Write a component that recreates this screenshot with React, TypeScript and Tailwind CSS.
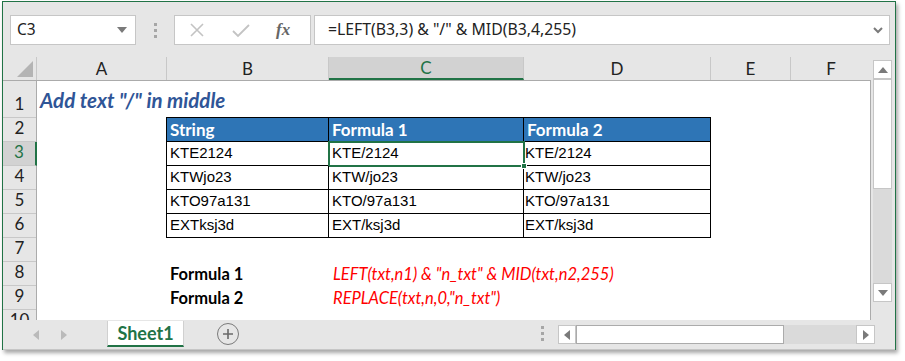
import React from "react";

const rows = [
  ["KTE2124", "KTE/2124", "KTE/2124"],
  ["KTWjo23", "KTW/jo23", "KTW/jo23"],
  ["KTO97a131", "KTO/97a131", "KTO/97a131"],
  ["EXTksj3d", "EXT/ksj3d", "EXT/ksj3d"],
];

const cols = [
  { name: "A", w: "w-[130px]" },
  { name: "B", w: "w-[162px]" },
  { name: "C", w: "w-[195px]" },
  { name: "D", w: "w-[187px]" },
  { name: "E", w: "w-[80px]" },
  { name: "F", w: "w-[80px]" },
];

const rowHeights = ["h-[37px]", "h-[24px]", "h-[24px]", "h-[24px]", "h-[24px]", "h-[24px]", "h-[24px]", "h-[24px]", "h-[24px]", "h-[24px]"];

function Tri({ dir }: { dir: "up" | "down" | "left" | "right" }) {
  const pts = {
    up: "0,6 5,0 10,6",
    down: "0,0 10,0 5,6",
    left: "6,0 6,10 0,5",
    right: "0,0 0,10 6,5",
  }[dir];
  const size = dir === "up" || dir === "down" ? { w: 10, h: 6 } : { w: 6, h: 10 };
  return (
    <svg width={size.w} height={size.h} viewBox={`0 0 ${size.w} ${size.h}`}>
      <polygon points={pts} fill="#7a7a7a" />
    </svg>
  );
}

function Dots() {
  return (
    <div className="flex flex-col gap-[3px]">
      <div className="w-[3px] h-[3px] bg-[#a6a6a6]" />
      <div className="w-[3px] h-[3px] bg-[#a6a6a6]" />
      <div className="w-[3px] h-[3px] bg-[#a6a6a6]" />
    </div>
  );
}

export default function App() {
  const ui = { fontFamily: '"Noto Sans", "Open Sans", sans-serif' };
  const cal = { fontFamily: 'Lato, "Noto Sans", sans-serif' };
  const arial = { fontFamily: '"Liberation Sans", Arial, sans-serif' };

  return (
    <div className="w-[905px] h-[361px] bg-white pt-[1px] pl-[2px] overflow-hidden">
      <div className="w-[894px] h-[349px] bg-[#e6e6e6] border-t border-l border-r border-[#217346] border-b-0 shadow-[2px_3px_4px_rgba(0,0,0,0.35)] flex flex-col">
        {/* formula bar */}
        <div className="h-[55px] flex items-start pt-[13px] pl-[7px] shrink-0" style={ui}>
          <div className="w-[126px] h-[30px] bg-white border border-[#c6c6c6] flex items-center justify-between pl-[6px] pr-[8px]">
            <span className="text-[15.5px] text-[#222]">C3</span>
            <Tri dir="down" />
          </div>
          <div className="w-[38px] h-[30px] flex items-center justify-center">
            <Dots />
          </div>
          <div className="w-[137px] h-[30px] bg-white border border-[#c6c6c6] flex items-center pl-[14px]">
            <svg width="16" height="16" viewBox="0 0 16 16">
              <path d="M2 2 L14 14 M14 2 L2 14" stroke="#c3c3c3" strokeWidth="1.6" fill="none" />
            </svg>
            <svg width="18" height="16" viewBox="0 0 18 16" className="ml-[27px]">
              <path d="M1 9 L6 14 L17 3" stroke="#c3c3c3" strokeWidth="1.8" fill="none" />
            </svg>
            <span className="ml-[26px] text-[17px] italic font-bold text-[#666]" style={{ fontFamily: '"Liberation Serif", serif' }}>
              fx
            </span>
          </div>
          <div className="ml-[3px] w-[576px] h-[30px] bg-white border border-[#c6c6c6] flex items-center justify-between pl-[13px] pr-[6px]">
            <span className="text-[15.8px] text-[#222]">=LEFT(B3,3) &amp; "/" &amp; MID(B3,4,255)</span>
            <svg width="10" height="7" viewBox="0 0 10 7">
              <path d="M1 1 L5 5 L9 1" stroke="#7a7a7a" strokeWidth="2" fill="none" />
            </svg>
          </div>
        </div>

        {/* sheet area */}
        <div className="flex h-[264px] shrink-0">
          <div className="w-[868px] flex flex-col">
            {/* column headers */}
            <div className="h-[24px] flex border-b border-[#ababab] shrink-0" style={cal}>
              <div className="w-[34px] border-r border-[#c8c8c8] flex items-end justify-end pr-[3px] pb-[3px]">
                <svg width="16" height="16" viewBox="0 0 16 16">
                  <polygon points="16,0 16,16 0,16" fill="#b4b4b4" />
                </svg>
              </div>
              {cols.map((c) =>
                c.name === "C" ? (
                  <div key={c.name} className={`${c.w} bg-[#d2d2d2] border-r border-[#c8c8c8] border-b-2 border-b-[#217346] flex items-center justify-center text-[17px] text-[#217346]`}>
                    {c.name}
                  </div>
                ) : (
                  <div key={c.name} className={`${c.w} border-r border-[#c8c8c8] flex items-center justify-center text-[17px] text-[#222] ${c.name === "F" ? "border-r-0" : ""}`}>
                    {c.name}
                  </div>
                )
              )}
            </div>

            {/* grid */}
            <div className="flex h-[239px] overflow-hidden border-r border-[#ababab]">
              <div className="w-[34px] flex flex-col border-r border-[#ababab] shrink-0" style={cal}>
                {rowHeights.map((h, i) =>
                  i === 2 ? (
                    <div key={i} className={`${h} shrink-0 bg-[#d2d2d2] border-b border-[#c8c8c8] border-r-2 border-r-[#217346] -mr-[1px] flex items-end justify-center pb-[1px] text-[17px] text-[#217346]`}>
                      {i + 1}
                    </div>
                  ) : (
                    <div key={i} className={`${h} shrink-0 border-b border-[#c8c8c8] flex items-end justify-center pb-[1px] text-[17px] text-[#222]`}>
                      {i + 1}
                    </div>
                  )
                )}
              </div>

              <div className="flex-1 bg-white flex flex-col">
                <div className="h-[36px] flex items-end pl-[3px] pb-[7px] shrink-0">
                  <span className="text-[20.5px] leading-none font-bold italic text-[#2f5597]" style={cal}>
                    Add text "/" in middle
                  </span>
                </div>

                {/* table */}
                <div className="ml-[129px] flex flex-col w-fit">
                  <div className="flex h-[25px] border-t border-black text-white font-bold text-[17px]" style={cal}>
                    <div className="w-[162px] bg-[#2e75b6] border-l border-b border-black pl-[3px] flex items-center">String</div>
                    <div className="w-[195px] bg-[#2e75b6] border-l border-b border-black pl-[3px] flex items-center">Formula 1</div>
                    <div className="w-[188px] bg-[#2e75b6] border-l border-r border-b border-black pl-[3px] flex items-center">Formula 2</div>
                  </div>
                  {rows.map((r, i) => (
                    <div key={i} className="flex h-[24px] text-[15px] text-black" style={arial}>
                      <div className="w-[162px] border-l border-b border-black pl-[3px] flex items-center">{r[0]}</div>
                      <div className="w-[195px] border-l border-b border-black pl-[3px] flex items-center relative">
                        {r[1]}
                        {i === 0 && (
                          <>
                            <div className="absolute -left-[1px] -top-[1px] w-[197px] h-[26px] border-2 border-[#217346]" />
                            <div className="absolute -right-[4px] -bottom-[4px] w-[6px] h-[6px] bg-[#217346] border border-white" />
                          </>
                        )}
                      </div>
                      <div className="w-[188px] border-l border-r border-b border-black pl-[1px] flex items-center">{r[2]}</div>
                    </div>
                  ))}
                </div>

                <div className="h-[24px] shrink-0" />
                <div className="h-[24px] flex items-center shrink-0 text-[16.5px]" style={cal}>
                  <div className="ml-[133px] w-[162px] font-bold text-black">Formula 1</div>
                  <div className="pl-[1px] italic text-[#ff0000]">LEFT(txt,n1) &amp; "n_txt" &amp; MID(txt,n2,255)</div>
                </div>
                <div className="h-[24px] flex items-center shrink-0 text-[16.5px]" style={cal}>
                  <div className="ml-[133px] w-[162px] font-bold text-black">Formula 2</div>
                  <div className="pl-[1px] italic text-[#ff0000]">REPLACE(txt,n,0,"n_txt")</div>
                </div>
              </div>
            </div>
          </div>

          {/* vertical scrollbar */}
          <div className="w-[24px] pl-[2px] pt-[3px] flex flex-col">
            <div className="w-[19px] h-[19px] bg-white border border-[#c6c6c6] flex items-center justify-center">
              <Tri dir="up" />
            </div>
            <div className="w-[19px] h-[223px] bg-[#dadada] flex flex-col justify-between">
              <div className="w-[19px] h-[110px] bg-white border border-[#c6c6c6]" />
              <div className="w-[19px] h-[19px] bg-white border border-[#c6c6c6] flex items-center justify-center">
                <Tri dir="down" />
              </div>
            </div>
          </div>
        </div>

        {/* tab bar */}
        <div className="h-[29px] flex border-b border-[#c6c6c6] shrink-0">
          <div className="w-[104px] flex items-center pl-[30px] gap-[22px] opacity-40">
            <Tri dir="left" />
            <Tri dir="right" />
          </div>
          <div className="w-[77px] h-[26px] bg-white border-l border-r border-[#d0d0d0] border-b-2 border-b-[#217346] flex items-center justify-center text-[18px] font-bold text-[#217346]" style={cal}>
            Sheet1
          </div>
          <div className="ml-[33px] flex items-center pb-[3px]">
            <div className="w-[22px] h-[22px] rounded-full border-[1.5px] border-[#7a7a7a] flex items-center justify-center">
              <svg width="12" height="12" viewBox="0 0 12 12">
                <path d="M6 1 V11 M1 6 H11" stroke="#6a6a6a" strokeWidth="1.6" />
              </svg>
            </div>
          </div>
          <div className="ml-[302px] flex items-center pb-[3px]">
            <Dots />
          </div>
          <div className="ml-[14px] pt-[4px] flex items-start">
            <div className="w-[18px] h-[19px] bg-white border border-[#c6c6c6] flex items-center justify-center">
              <Tri dir="left" />
            </div>
            <div className="w-[208px] h-[19px] bg-white border border-[#ababab]" />
            <div className="w-[72px] h-[19px] bg-[#dadada]" />
            <div className="w-[19px] h-[19px] bg-white border border-[#c6c6c6] flex items-center justify-center">
              <Tri dir="right" />
            </div>
          </div>
        </div>
      </div>
    </div>
  );
}
